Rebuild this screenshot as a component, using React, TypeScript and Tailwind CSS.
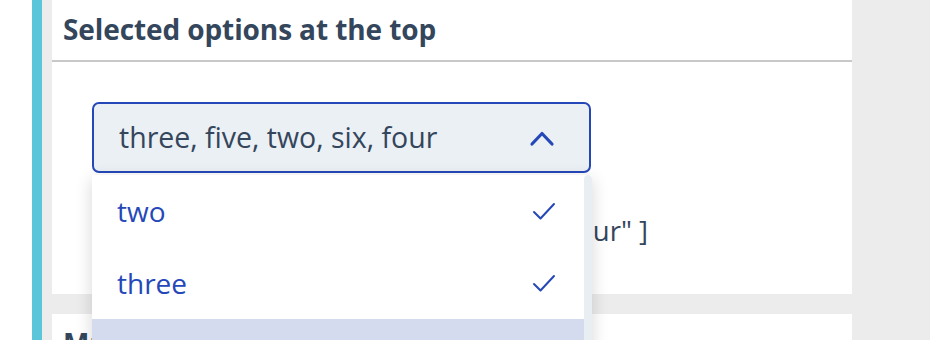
const BLUE = "#2548b9";

const options = [
  { label: "two", selected: true },
  { label: "three", selected: true },
  { label: "five", selected: true, active: true },
];

const Check = () => (
  <svg width="24" height="20" viewBox="0 0 24 20" fill="none" stroke={BLUE} strokeWidth="2" strokeLinecap="round" strokeLinejoin="round">
    <path d="M2 11 L8.5 17.5 L22 3" />
  </svg>
);

const ChevronUp = () => (
  <svg width="26" height="18" viewBox="0 0 26 18" fill="none" stroke={BLUE} strokeWidth="3.2" strokeLinecap="round" strokeLinejoin="round">
    <path d="M3 15 L13 4.5 L23 15" />
  </svg>
);

export default function App() {
  return (
    <div className="w-[930px] h-[340px] overflow-hidden bg-white" style={{ fontFamily: '"Open Sans", "Noto Sans", sans-serif' }}>
      <div className="ml-[32px] h-full border-l-[10px] border-[#5bc5d9] bg-[#ececec] pl-[10px] flex flex-col gap-[20px]">
        {/* card */}
        <div className="w-[800px] bg-white shrink-0">
          <div className="h-[62px] border-b-2 border-[#c8c8c8] px-[11px] pt-[11px]">
            <h2 className="text-[28px] leading-[36px] font-bold text-[#34465c] tracking-[-0.1px]">Selected options at the top</h2>
          </div>
          <div className="pl-[40px] pt-[40px] h-[232px]">
            <div className="relative w-[499px]">
              <button className="w-full h-[71px] rounded-[7px] border-2 border-[#2548b9] bg-[#ebf0f4] flex items-center justify-between pl-[25px] pr-[34px]">
                <span className="text-[28.5px] text-[#34465c]">three, five, two, six, four</span>
                <ChevronUp />
              </button>
              <div className="absolute left-0 top-[73px] w-[500px] bg-white flex shadow-[0_4px_16px_rgba(0,0,0,0.16)] z-10">
                <ul className="flex-1">
                  {options.map((o) => (
                    <li
                      key={o.label}
                      className={`h-[72px] flex items-center justify-between pl-[25px] pr-[28px] text-[28px] text-[#2548b9] ${o.active ? "bg-[#d5dbee]" : ""}`}
                    >
                      <span>{o.label}</span>
                      {o.selected && <Check />}
                    </li>
                  ))}
                </ul>
                <div className="w-[8px] bg-[#e9eef2] rounded-t-full" />
              </div>
            </div>
            <div className="mt-[38px] w-[556px] flex justify-end">
              <p className="text-[27.5px] leading-[39px] text-[#34465c] whitespace-nowrap">[ "three", "five", "two", "six", "four" ]</p>
            </div>
          </div>
        </div>
        <div className="w-[800px] bg-white shrink-0 h-[60px] px-[11px] pt-[11px]">
          <h2 className="text-[28px] leading-[36px] font-bold text-[#34465c]">Multiple selection</h2>
        </div>
      </div>
    </div>
  );
}
